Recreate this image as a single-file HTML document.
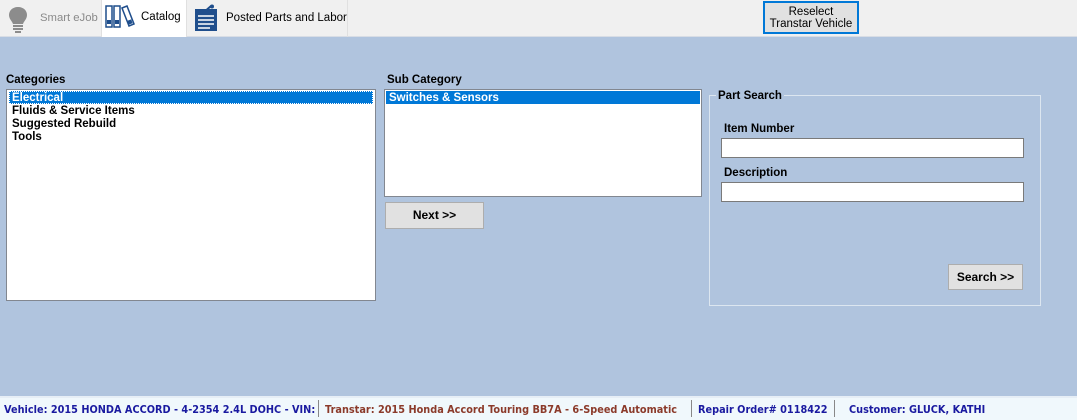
<!DOCTYPE html>
<html><head><style>
*{margin:0;padding:0;box-sizing:border-box}
body{width:1077px;height:420px;background:#b0c4de;font-family:"Liberation Sans",sans-serif;position:relative;overflow:hidden;font-size:12px}
.a{position:absolute}
.b{font-weight:bold;font-size:11.5px;color:#000}
.lb{background:#fff;border:1px solid #828790}
.btn{background:#e1e1e1;border:1px solid #adadad;text-align:center;font-weight:bold;font-size:12px}
.inp{background:#fff;border:1px solid #7a7a7a}
.st{font-family:'DejaVu Sans',sans-serif;font-weight:bold;font-size:11px;white-space:nowrap;transform:scaleX(0.885);transform-origin:left}
</style></head><body>
<div class="a" style="left:0;top:0;width:1077px;height:37px;background:#f0f0f0;border-bottom:1px solid #d8dde5"></div>
<svg class="a" style="left:8px;top:6px" width="20" height="28" viewBox="0 0 20 28"><path d="M10 1C4 1 1 5 1 9c0 4 3 6 4 9h10c1-3 4-5 4-9 0-4-3-8-9-8z" fill="#8c8c8c"/><rect x="5" y="19" width="10" height="2" fill="#8c8c8c"/><rect x="5" y="22" width="10" height="2" fill="#8c8c8c"/><rect x="7" y="25" width="6" height="2" fill="#8c8c8c"/></svg>
<div class="a" style="left:40px;top:12px;color:#8a8a8a;font-size:11.3px">Smart eJob</div>
<div class="a" style="left:101px;top:0;width:86px;height:37px;background:#fff;border-left:1px solid #e0e0e0;border-right:1px solid #e0e0e0"></div>
<svg class="a" style="left:105px;top:5px" width="30" height="24" viewBox="0 0 30 24"><g fill="none" stroke="#1f4e8c" stroke-width="1.5"><rect x="1" y="1" width="6" height="21"/><rect x="9" y="1" width="6" height="21"/><path d="M17 3l5-2 7 18-5 2z"/></g><g fill="#1f4e8c"><rect x="2" y="15" width="4" height="4"/><rect x="10" y="15" width="4" height="4"/><rect x="23" y="15" width="4" height="4" transform="rotate(-20 25 17)"/></g></svg>
<div class="a" style="left:141px;top:11px;font-size:11.5px">Catalog</div>
<div class="a" style="left:187px;top:0;width:161px;height:37px;border-right:1px solid #e0e0e0"></div>
<svg class="a" style="left:194px;top:4px" width="24" height="28" viewBox="0 0 24 28"><rect x="1" y="5" width="22" height="22" fill="#1f4e8c"/><g stroke="#fff" stroke-width="1.5"><path d="M4 12h16M4 16h16M4 20h16M4 24h12"/></g><path d="M9 9l8-7" stroke="#1f4e8c" stroke-width="2"/><circle cx="18" cy="2.5" r="2" fill="#1f4e8c"/></svg>
<div class="a" style="left:226px;top:12px;font-size:11.5px">Posted Parts and Labor</div>
<div class="a" style="left:763px;top:1px;width:96px;height:33px;background:#e1e1e1;border:2px solid #0078d7;text-align:center;font-size:11.5px;line-height:12px;padding-top:3px">Reselect<br>Transtar Vehicle</div>
<div class="a b" style="left:6px;top:74px">Categories</div>
<div class="a lb" style="left:6px;top:89px;width:370px;height:212px"></div>
<div class="a" style="left:9px;top:91px;width:364px;height:13px;background:#0078d7;border:1px dotted #fff"></div>
<div class="a b" style="left:12px;top:92px;color:#fff;line-height:13px">Electrical</div>
<div class="a b" style="left:12px;top:105px;line-height:13px">Fluids &amp; Service Items<br>Suggested Rebuild<br>Tools</div>
<div class="a b" style="left:387px;top:74px">Sub Category</div>
<div class="a lb" style="left:384px;top:89px;width:318px;height:108px"></div>
<div class="a" style="left:386px;top:91px;width:314px;height:13px;background:#0078d7"></div>
<div class="a b" style="left:389px;top:92px;color:#fff;line-height:13px">Switches &amp; Sensors</div>
<div class="a btn" style="left:385px;top:202px;width:99px;height:27px;line-height:25px">Next &gt;&gt;</div>
<div class="a" style="left:709px;top:95px;width:332px;height:211px;border:1px solid #dce6f0"></div>
<div class="a b" style="left:716px;top:90px;background:#b0c4de;padding:0 2px">Part Search</div>
<div class="a b" style="left:724px;top:123px">Item Number</div>
<div class="a inp" style="left:721px;top:138px;width:303px;height:20px"></div>
<div class="a b" style="left:724px;top:167px">Description</div>
<div class="a inp" style="left:721px;top:182px;width:303px;height:20px"></div>
<div class="a btn" style="left:948px;top:264px;width:75px;height:26px;line-height:24px">Search &gt;&gt;</div>
<div class="a" style="left:0;top:396px;width:1077px;height:24px;background:#f0f8fc;border-top:2px solid #e6eef6"></div>
<div class="a st" style="left:4px;top:403px;color:#1a1aa0">Vehicle: 2015 HONDA ACCORD - 4-2354 2.4L DOHC - VIN:</div>
<div class="a" style="left:318px;top:400px;width:1px;height:17px;background:#888"></div>
<div class="a st" style="left:325px;top:403px;color:#8b3a2a">Transtar: 2015 Honda Accord Touring BB7A - 6-Speed Automatic</div>
<div class="a" style="left:691px;top:400px;width:1px;height:17px;background:#888"></div>
<div class="a st" style="left:698px;top:403px;color:#1a1aa0">Repair Order# 0118422</div>
<div class="a" style="left:834px;top:400px;width:1px;height:17px;background:#888"></div>
<div class="a st" style="left:849px;top:403px;color:#1a1aa0">Customer: GLUCK, KATHI</div>
</body></html>
